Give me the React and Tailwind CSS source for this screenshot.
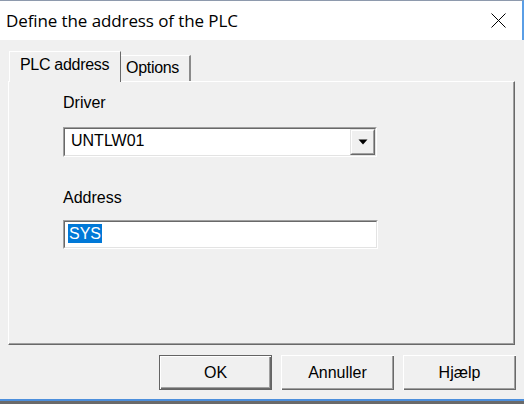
import React from 'react';

const ui = { fontFamily: '"Liberation Sans", Arial, sans-serif' };

const Btn = ({ label, isDefault }) => (
  <button
    className={
      'w-[113px] h-[35px] bg-[#f0f0f0] text-[16px] leading-[18px] text-black ' +
      (isDefault
        ? 'border border-[#646464] shadow-[inset_1px_1px_0_#ffffff,inset_-1px_-1px_0_#696969,inset_-2px_-2px_0_#a0a0a0]'
        : 'shadow-[inset_1px_1px_0_#ffffff,inset_-1px_-1px_0_#696969,inset_-2px_-2px_0_#a0a0a0]')
    }
  >
    {label}
  </button>
);

// sunken 3D frame used by the combo box and the edit field
const Sunken = ({ className, children }) => (
  <div className={'border-t border-l border-[#a0a0a0] border-r-white border-b-white border-r border-b ' + className}>
    <div className="h-full border-t border-l border-t-[#696969] border-l-[#696969] border-r border-b border-r-[#e3e3e3] border-b-[#e3e3e3] bg-white flex">
      {children}
    </div>
  </div>
);

export default function App() {
  return (
    <div className="w-[524px] h-[404px] bg-[#f0f0f0] flex flex-col overflow-hidden" style={ui}>
      {/* Title bar */}
      <div className="h-[40px] shrink-0 bg-white border-t border-[#8e9aad] border-r-2 border-r-[#5a9ee6] flex items-center justify-between pl-[6px] pr-[16px]">
        <span
          className="text-[17px] text-black tracking-[-0.1px]"
          style={{ fontFamily: '"Open Sans", "Noto Sans", sans-serif' }}
        >
          Define the address of the PLC
        </span>
        <svg width="15" height="15" viewBox="0 0 15 15">
          <path d="M0.5 0.5 L14.5 14.5 M14.5 0.5 L0.5 14.5" stroke="#000" strokeWidth="1" fill="none" />
        </svg>
      </div>

      {/* Tabs */}
      <div className="mt-[11px] h-[30px] shrink-0 flex items-end ml-[9px]">
        <div className="relative z-10 -mb-px h-[31px] w-[112px] bg-[#f0f0f0] border-t border-l border-white border-r border-r-[#696969] pl-[10px] pt-[4px] text-[16px] leading-[18px] tracking-[-0.3px] text-black">
          PLC address
        </div>
        <div className="h-[26px] w-[70px] border-t border-white border-r-2 border-r-[#8a8a8a] pl-[5px] pt-[3px] text-[16px] leading-[18px] tracking-[-0.3px] text-black">
          Options
        </div>
      </div>

      {/* Tab page */}
      <div className="h-[264px] shrink-0 ml-[8px] w-[507px] border-t border-l border-white border-r border-b border-r-[#696969] border-b-[#696969]">
        <div className="h-full border-r border-b border-[#a0a0a0] pl-[54px] pt-[12px] flex flex-col text-[16px] leading-[18px] text-black">
          <div>Driver</div>
          <Sunken className="mt-[15px] w-[314px] h-[30px]">
            <div className="flex-1 pl-[6px] pt-[3px]">UNTLW01</div>
            <div className="w-[25px] h-full bg-[#f0f0f0] border-t border-l border-[#e3e3e3] border-r border-b border-r-[#696969] border-b-[#696969]">
              <div className="h-full border-r border-b border-[#a0a0a0] border-t border-l border-t-white border-l-white flex items-center justify-center">
                <svg width="10" height="6" viewBox="0 0 10 6">
                  <polygon points="0.5,0.5 9.5,0.5 5,5.5" fill="#000" />
                </svg>
              </div>
            </div>
          </Sunken>

          <div className="mt-[32px]">Address</div>
          <Sunken className="mt-[13px] w-[315px] h-[29px]">
            <div className="pl-[3px] pt-[2px]">
              <span className="inline-block bg-[#0078d7] text-white px-px leading-[19px]">SYS</span>
            </div>
          </Sunken>
        </div>
      </div>

      {/* Buttons */}
      <div className="mt-[10px] flex justify-end gap-[9px] pr-[8px] shrink-0">
        <Btn label="OK" isDefault />
        <Btn label="Annuller" />
        <Btn label="Hjælp" />
      </div>

      <div className="mt-[9px] h-[2px] shrink-0 bg-[#4c8fdc]" />
      <div className="flex-1 bg-[#6a6a6a]" />
    </div>
  );
}
